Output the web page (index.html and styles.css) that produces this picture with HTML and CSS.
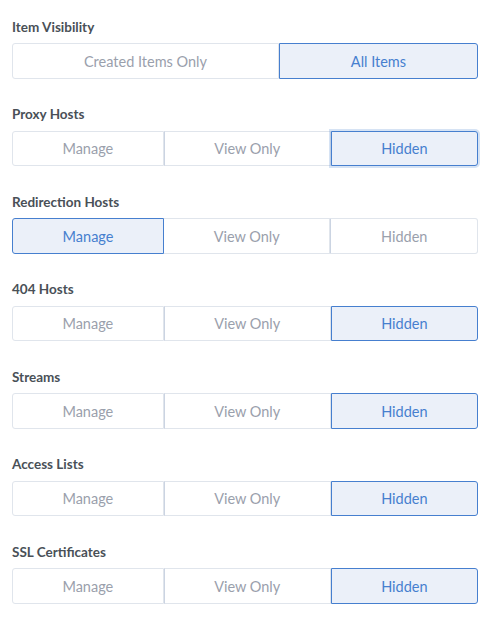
FILE: index.html
```html
<!DOCTYPE html>
<html>
<head>
<meta charset="utf-8">
<link rel="stylesheet" href="styles.css">
</head>
<body>
<div class="perms">
  <div class="group">
    <div class="label">Item Visibility</div>
    <div class="btns">
      <div class="btn">Created Items Only</div>
      <div class="btn active">All Items</div>
    </div>
  </div>
  <div class="group">
    <div class="label">Proxy Hosts</div>
    <div class="btns">
      <div class="btn">Manage</div>
      <div class="btn">View Only</div>
      <div class="btn active focus">Hidden</div>
    </div>
  </div>
  <div class="group">
    <div class="label">Redirection Hosts</div>
    <div class="btns">
      <div class="btn active">Manage</div>
      <div class="btn">View Only</div>
      <div class="btn">Hidden</div>
    </div>
  </div>
  <div class="group">
    <div class="label">404 Hosts</div>
    <div class="btns">
      <div class="btn">Manage</div>
      <div class="btn">View Only</div>
      <div class="btn active">Hidden</div>
    </div>
  </div>
  <div class="group">
    <div class="label">Streams</div>
    <div class="btns">
      <div class="btn">Manage</div>
      <div class="btn">View Only</div>
      <div class="btn active">Hidden</div>
    </div>
  </div>
  <div class="group">
    <div class="label">Access Lists</div>
    <div class="btns">
      <div class="btn">Manage</div>
      <div class="btn">View Only</div>
      <div class="btn active">Hidden</div>
    </div>
  </div>
  <div class="group">
    <div class="label">SSL Certificates</div>
    <div class="btns">
      <div class="btn">Manage</div>
      <div class="btn">View Only</div>
      <div class="btn active">Hidden</div>
    </div>
  </div>
</div>
</body>
</html>
```
FILE: styles.css
```css
html, body {
  margin: 0;
  padding: 0;
  background: #ffffff;
}
body {
  font-family: "Lato", "Liberation Sans", sans-serif;
  color: #495057;
}
.perms {
  padding: 18px 10px 0 12px;
}
.group {
  margin-bottom: 26.6px;
}
.label {
  font-size: 13.5px;
  font-weight: 700;
  line-height: 18px;
  margin-bottom: 7.3px;
  color: #495057;
}
.btns {
  display: flex;
}
.btn {
  flex: 1 1 auto;
  height: 35.6px;
  box-sizing: border-box;
  display: flex;
  align-items: center;
  justify-content: center;
  padding: 0 12px;
  font-size: 14.5px;
  color: #9aa0ac;
  border: 1px solid #e0e5ec;
  border-left-color: #cbd4e2;
  background: #ffffff;
  white-space: nowrap;
}
.btn:first-child {
  border-left-color: #e0e5ec;
  border-radius: 3px 0 0 3px;
}
.btn:last-child {
  border-radius: 0 3px 3px 0;
}
.btn.active {
  background: #ebf0f9;
  border-color: #467fcf;
  color: #467fcf;
}
.btn.active + .btn {
  border-left: none;
}
.btn.focus {
  box-shadow: 0 0 0 2px rgba(70, 127, 207, 0.22);
}
```
